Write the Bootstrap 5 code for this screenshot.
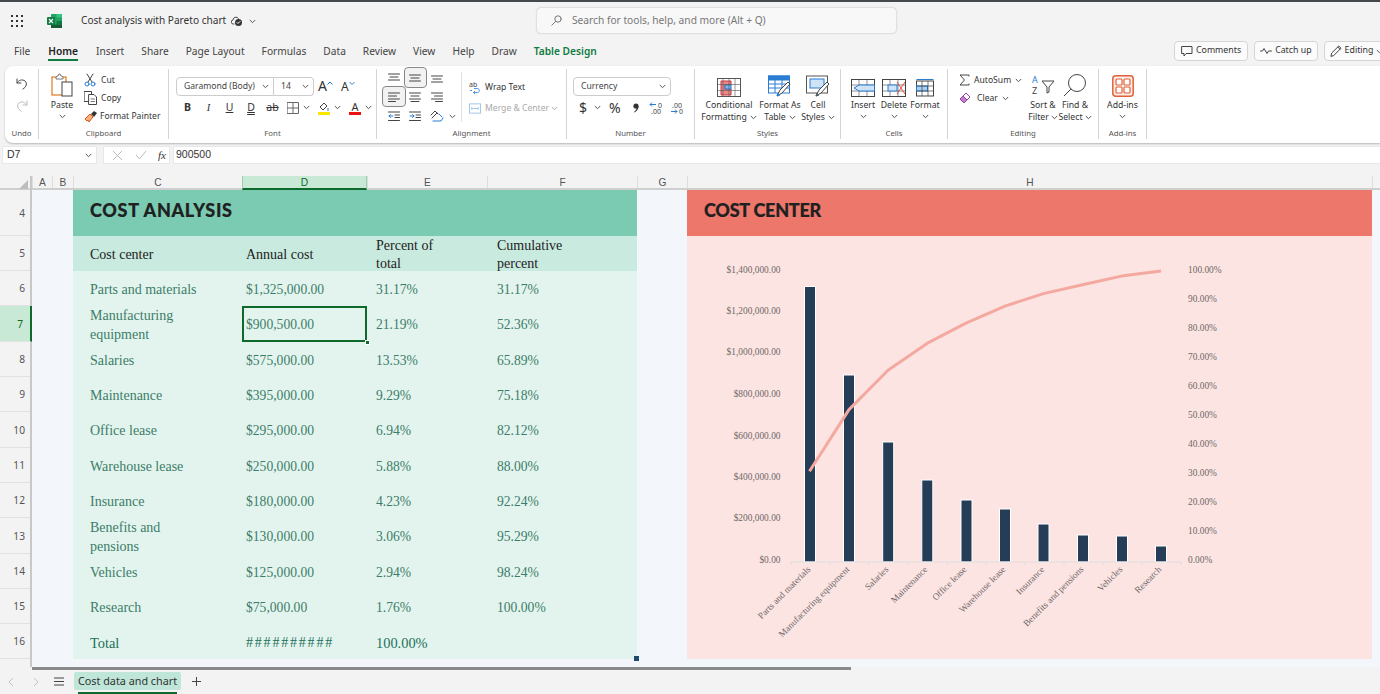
<!DOCTYPE html>
<html lang="en">
<head>
<meta charset="utf-8">
<title>Cost analysis with Pareto chart</title>
<link href="https://cdn.jsdelivr.net/npm/bootstrap@5.3.0/dist/css/bootstrap.min.css" rel="stylesheet">
<style>
html,body{height:694px;overflow:hidden}
body{font-family:"Noto Sans",sans-serif;background:#f3f3f3;color:#333;font-size:10px;border-top:2px solid #45494c;width:1380px}
svg{display:block;flex:none}
.ic{fill:none;stroke:#444;stroke-width:1;stroke-linecap:round;stroke-linejoin:round}
.chev{width:7px;height:5px;fill:none;stroke:#555;stroke-width:1}
.titlebar{height:38px;position:relative}
.waffle{margin-left:11px;margin-right:24px}
.doc-title{font-size:10.1px;color:#333;margin-left:19px;margin-right:5px}
.searchbox{position:absolute;left:537px;top:6px;width:359px;height:25px;background:#f8f8f8;border-radius:4px;box-shadow:0 0 2px rgba(0,0,0,.3);color:#777;font-size:10.2px;padding-left:14px;gap:10px}
.tabrow{height:26px;padding-left:14px}
.tabitem{font-size:10.2px;color:#444;margin-right:17px;line-height:22px;height:22px;text-decoration:none}
.tabitem.on{font-weight:600;color:#222;border-bottom:2px solid #107c41;height:21px}
.tabitem.design{font-weight:600;color:#107c41}
.actbtn{height:20px;margin-top:1px;background:#fbfbfb;border:1px solid #d5d5d5;border-radius:4px;font-size:8.8px;color:#333;padding:0 5px;gap:3px;margin-right:6px;flex:none}
.ribbon{margin-left:5px;height:77px;background:#fff;border-radius:8px 0 0 8px;box-shadow:0 1px 2px rgba(0,0,0,.25);padding-top:3px}
.rgrp{height:70px;border-right:1px solid #d4d4d4;flex:none;display:flex;flex-direction:column}
.rbody{height:58px;display:flex;position:relative}
.rlabel{text-align:center;font-size:7.8px;color:#555;line-height:12px}
.g-undo{width:34px}.g-clip{width:130px}.g-font{width:208px}.g-align{width:190px}.g-num{width:128px}.g-style{width:146px}.g-cell{width:107px}.g-edit{width:151px}.g-add{width:48px}
.vbtn{display:flex;flex-direction:column;align-items:center;font-size:8.7px;line-height:12px;color:#333;text-align:center}
.vbtn .ibox{height:30px;display:flex;align-items:flex-end;padding-bottom:2px}
.vbtn .chev{margin:3px auto 0}
.vbtn span{display:flex;align-items:center;gap:1px;justify-content:center;white-space:nowrap}
.smbtn{display:flex;align-items:center;gap:4px;height:18px;font-size:8.6px;color:#333;white-space:nowrap}
.selbox{height:19px;border:1px solid #ccc;border-radius:4px;font-size:8.6px;color:#444;align-items:center;display:flex;justify-content:space-between;padding:0 4px 0 7px}
.fgl{height:19px;display:flex;align-items:center;justify-content:center}
.sel-al{outline:1px solid #888;border-radius:3px;background:#f2f2f2}
.dis{color:#aaa}
.fbar{height:18px;margin-top:3px;margin-left:2px;gap:6px}
.fbox{background:#fff;height:18px;border:1px solid #e8e8e8;display:flex;align-items:center;font-family:"Liberation Sans",sans-serif;font-size:10.5px;color:#333}
.sheet{margin-top:12px}
.rowhd{width:32px;flex:none;border-right:2px solid #c8c8c8}
.colhd{height:14px;border-bottom:2px solid #cfcfcf;position:relative}
.chcell{flex:none;height:12px;line-height:14px;text-align:center;font-size:10.2px;color:#555;border-left:1px solid #ddd;font-family:"Liberation Sans",sans-serif}
.chcell.cur{background:#c8e9d6;color:#0e6a2b;height:14px;border-bottom:2px solid #0e6a2b;border-left:1px solid #9fcfb3;border-right:1px solid #9fcfb3}
.corner{width:32px;flex:none;border-right:2px solid #c8c8c8;height:14px;position:relative}
.corner svg{position:absolute;right:2px;bottom:1px}
.rh{display:flex;align-items:center;justify-content:flex-end;padding:2px 5px 0 0;font-size:10.2px;color:#555;border-bottom:1px solid #e2e2e2}
.rh.cur{background:#c8e9d6;color:#0e6a2b;margin-right:-2px;border-right:2px solid #0e6a2b;padding-right:7px}
.gridbody{background:#f3f7fb;height:477px;flex:1;position:relative;overflow:hidden}
.tblwrap{margin-left:41px;width:564px;flex:none;position:relative}
.cost{table-layout:fixed;width:564px;margin:0;font-family:"Liberation Serif",serif;font-size:14px;color:#3c7d69;background:#e3f4ee;--bs-table-bg:transparent;--bs-table-color:#3c7d69;border-collapse:collapse}
.cost td,.cost th{padding:2px 3px 0 4px;border:0;vertical-align:middle;line-height:18px;font-weight:400;background:transparent;box-shadow:none}
.cost td:first-child,.cost th:first-child{padding-left:17px}
.cost td:nth-child(3),.cost th:nth-child(3){padding-left:9px}
.cost td:nth-child(4),.cost th:nth-child(4){padding-left:10px}
.cost .amt{font-size:13.6px}
.twoline{display:block;line-height:19px;margin:-2px 0}
.hh .twoline{line-height:18px}
.cost thead tr.tt th{background:#7bcbb2;height:46px;padding:0 0 6px 17px}
.sheadline{font-family:Lato,sans-serif;font-weight:900;font-size:18px;color:#20201f;margin:0;line-height:1;-webkit-text-stroke:.2px #20201f}
.spread{letter-spacing:.7px}
.tight{letter-spacing:-.25px}
.cost thead tr.hh th{background:#c9eadf;color:#222;height:35px}
.cost td.active{outline:2px solid #0e6a2b;outline-offset:-2px;box-shadow:inset 0 0 0 1px #0e6a2b}
.cost tr.tot td{color:#22705a;font-size:14.4px}
.cost tr.tot td.hash{font-size:14px;letter-spacing:1.8px}
.handle{position:absolute;width:5px;height:5px;background:#0e6a2b;border:1px solid #fff}
.corner-h{position:absolute;right:-2px;bottom:-2px;width:5px;height:5px;background:#1e4a6e}
.chartcol{margin-left:50px;width:685px;flex:none}
.chead{background:#ee776c;height:46px;padding-left:17px;padding-bottom:6px}
.cbody{background:#fce4e3;height:423px}
.cbody text{font-family:"Liberation Serif",serif;fill:#6f6866;font-size:9.4px}
.cbody .xlab text{font-size:9.2px}
.thumb{height:3px;background:#8a8a8a;width:819px;margin-left:32px}
.btmbar{height:23px;position:relative;background:#f3f3f3}
.sheettab{margin-left:10px;height:18px;background:#bfe6d9;border-radius:2px;padding:0 4px;font-size:10.8px;color:#333;line-height:18px;position:relative;margin-top:-1px}
.sheettab::after{content:"";position:absolute;left:4px;right:4px;bottom:-4px;height:2px;background:#0e6a2b}
</style>
</head>
<body>
<svg width="0" height="0" class="position-absolute">
<symbol id="ch" viewBox="0 0 7 5"><path d="M.8 1l2.700 2.700L6.200 1"/></symbol>
</svg>

<div class="titlebar d-flex align-items-center">
  <svg class="waffle" width="12" height="12" viewBox="0 0 12 12" fill="#333"><rect width="2" height="2"/><rect x="5" width="2" height="2"/><rect x="10" width="2" height="2"/><rect y="5" width="2" height="2"/><rect x="5" y="5" width="2" height="2"/><rect x="10" y="5" width="2" height="2"/><rect y="10" width="2" height="2"/><rect x="5" y="10" width="2" height="2"/><rect x="10" y="10" width="2" height="2"/></svg>
  <svg width="15" height="14" viewBox="0 0 15 14"><rect x="4" width="11" height="14" rx="1" fill="#21a366"/><rect x="9.500" width="5.500" height="3.500" fill="#33c481"/><rect x="9.500" y="7" width="5.500" height="3.500" fill="#107c41"/><rect x="4" y="10.500" width="11" height="3.500" fill="#185c37"/><rect y="3" width="8" height="8" rx="1" fill="#107c41"/><path d="M2 5l4 4M6 5L2 9" stroke="#fff" stroke-width="1.200"/></svg>
  <span class="doc-title">Cost analysis with Pareto chart</span>
  <svg width="12" height="11" viewBox="0 0 12 11" class="ic" style="margin-right:6px"><path d="M3 8H2.500A2 2 0 0 1 2 4a3 3 0 0 1 5.500-1.500"/><circle cx="7.500" cy="6.500" r="3.500" fill="#333" stroke="none"/><path d="M6 6.500l1 1 2-2" stroke="#fff"/></svg>
  <svg class="chev"><use href="#ch"/></svg>
  <div class="searchbox d-flex align-items-center">
    <svg width="11" height="11" viewBox="0 0 11 11" class="ic" style="stroke:#777"><circle cx="7" cy="4" r="3.200"/><path d="M4.700 6.300L.8 10.200"/></svg>
    <span>Search for tools, help, and more (Alt + Q)</span>
  </div>
</div>

<div class="tabrow d-flex align-items-start">
  <a class="tabitem" style="margin-right:18px">File</a><a class="tabitem on" style="margin-right:18px">Home</a><a class="tabitem">Insert</a><a class="tabitem">Share</a><a class="tabitem">Page Layout</a><a class="tabitem">Formulas</a><a class="tabitem">Data</a><a class="tabitem">Review</a><a class="tabitem">View</a><a class="tabitem">Help</a><a class="tabitem">Draw</a><a class="tabitem design">Table Design</a>
  <div class="ms-auto d-flex" style="width:206px;overflow:hidden;flex:none">
    <div class="actbtn d-flex align-items-center" style="padding:0 6px"><svg width="12" height="12" viewBox="0 0 12 12" class="ic"><path d="M1 1.500h10v7H5L3 11V8.500H1z"/></svg>Comments</div>
    <div class="actbtn d-flex align-items-center"><svg width="12" height="8" viewBox="0 0 12 8" class="ic"><path d="M.5 4h2l1.500-2.500L7 6.500 8.500 4h3"/></svg>Catch up</div>
    <div class="actbtn d-flex align-items-center"><svg width="12" height="12" viewBox="0 0 12 12" class="ic"><path d="M1 11l.7-3L8.800 1l2.200 2.200L4 10.300zM7.800 2l2.200 2.200"/></svg>Editing<svg class="chev"><use href="#ch"/></svg></div>
  </div>
</div>

<div class="ribbon d-flex">
  <div class="rgrp g-undo"><div class="rbody flex-column align-items-center pt-2 gap-2">
    <svg width="14" height="14" viewBox="0 0 14 14" class="ic"><path d="M2 2v4h4M2 6c2-3 5-4 8-2 2.500 2 1.500 6-2 8"/></svg>
    <svg width="14" height="14" viewBox="0 0 14 14" class="ic" style="stroke:#bbb"><path d="M12 2v4H8M12 6C10 3 7 2 4 4c-2.500 2-1.500 6 2 8"/></svg>
  </div><div class="rlabel">Undo</div></div>

  <div class="rgrp g-clip"><div class="rbody">
    <div class="vbtn" style="margin-left:11px;width:24px">
      <div class="ibox" style="height:30px"><svg width="22" height="24" viewBox="0 0 22 24" fill="none"><rect x="1" y="4" width="14" height="18" stroke="#e07a1f" stroke-width="1.200"/><path d="M5 4l1-1h1l1-2h1l1 2h1l1 1v2H5z" fill="#fff" stroke="#777"/><rect x="11" y="9" width="10" height="14" fill="#fff" stroke="#444"/></svg></div>
      <span>Paste</span><svg class="chev"><use href="#ch"/></svg>
    </div>
    <div class="d-flex flex-column" style="margin-left:10px;margin-top:2px">
      <div class="smbtn"><svg width="12" height="14" viewBox="0 0 12 14" class="ic"><path d="M3 1l5 8M9 1L4 9" stroke="#444"/><circle cx="3" cy="11" r="2" stroke="#2b7cd3"/><circle cx="9" cy="11" r="2" stroke="#2b7cd3"/></svg><span style="margin-left:1px">Cut</span></div>
      <div class="smbtn"><svg width="13" height="14" viewBox="0 0 13 14" class="ic"><rect x=".5" y=".5" width="7" height="10"/><path d="M5 3.500h5l2.500 2.500v7.500H5z" fill="#fff"/><path d="M7 8h3.500M7 10.500h3.500" stroke-width=".7"/></svg><span>Copy</span></div>
      <div class="smbtn" style="gap:2px"><svg width="14" height="13" viewBox="0 0 14 13" fill="none"><path d="M1 9l5-5 3 3-4 5-1-2-1 1z" fill="#f7b27a" stroke="#d9581d"/><path d="M7 4l3-3 3 2-3 4z" fill="#333"/></svg><span>Format Painter</span></div>
    </div>
  </div><div class="rlabel">Clipboard</div></div>

  <div class="rgrp g-font"><div class="rbody flex-column" style="padding:8px 0 0 7px">
    <div class="d-flex align-items-center">
      <div class="selbox" style="width:98px;border-radius:4px 0 0 4px"><span>Garamond (Body)</span><svg class="chev"><use href="#ch"/></svg></div>
      <div class="selbox" style="width:40px;border-left:0;border-radius:0 4px 4px 0"><span>14</span><svg class="chev"><use href="#ch"/></svg></div>
      <div class="d-flex align-items-start" style="margin-left:4px;font-size:14px;line-height:18px;color:#333"><span>A</span><svg width="6" height="4" viewBox="0 0 6 4" fill="none" stroke="#2b7cd3" class="mt-1"><path d="M.5 3.500L3 1l2.500 2.500"/></svg><span class="ms-2" style="font-size:12px;margin-top:1px">A</span><svg width="6" height="4" viewBox="0 0 6 4" fill="none" stroke="#2b7cd3" class="mt-1"><path d="M.5 1L3 3.500 5.500 1"/></svg></div>
    </div>
    <div class="d-flex align-items-center" style="margin-top:2px;padding-left:1px;font-size:10.5px;height:19px;color:#333">
      <span class="fgl" style="width:21px;font-weight:700">B</span><span class="fgl" style="width:21px;font-style:italic;font-family:'Liberation Serif',serif">I</span><span class="fgl text-decoration-underline" style="width:21px">U</span><span class="fgl" style="width:22px;text-decoration:underline double">D</span><span class="fgl text-decoration-line-through" style="width:21px">ab</span>
      <svg width="12" height="12" viewBox="0 0 12 12" class="ic ms-1" style="stroke:#666"><rect x=".5" y=".5" width="11" height="11"/><path d="M6 .5v11M.5 6h11"/></svg><svg class="chev ms-1"><use href="#ch"/></svg>
      <svg width="12" height="14" viewBox="0 0 12 14" class="ms-2" fill="none"><path d="M2 6l4-4 3 3-4 4z" stroke="#444"/><path d="M10 7v3" stroke="#2b7cd3"/><rect y="11" width="12" height="3" fill="#ffe600"/></svg><svg class="chev ms-1"><use href="#ch"/></svg>
      <span class="ms-2 position-relative d-flex flex-column align-items-center" style="width:12px;line-height:11px;font-size:11px">A<i class="d-block" style="width:12px;height:3px;background:#ee1111"></i></span><svg class="chev ms-1"><use href="#ch"/></svg>
    </div>
  </div><div class="rlabel">Font</div></div>

  <div class="rgrp g-align"><div class="rbody">
    <div class="d-flex flex-column" style="margin:-1px 0 0 6px;width:66px">
      <div class="d-flex"><span class="fgl" style="width:21.5px"><svg width="12" height="10" viewBox="0 0 12 10" class="ic"><path d="M.5 1h11M2 4h8M.5 7h11"/></svg></span><span class="fgl sel-al" style="width:21.5px"><svg width="12" height="10" viewBox="0 0 12 10" class="ic"><path d="M.5 2h11M2 5h8M.5 8h11"/></svg></span><span class="fgl" style="width:21.5px"><svg width="12" height="10" viewBox="0 0 12 10" class="ic"><path d="M.5 3h11M2 6h8M.5 9h11"/></svg></span></div>
      <div class="d-flex"><span class="fgl sel-al" style="width:21.5px"><svg width="12" height="10" viewBox="0 0 12 10" class="ic"><path d="M.5 1h11M.5 4h8M.5 7h11M.5 9.500h7"/></svg></span><span class="fgl" style="width:21.5px"><svg width="12" height="10" viewBox="0 0 12 10" class="ic"><path d="M.5 1h11M2 4h8M.5 7h11M2 9.500h8"/></svg></span><span class="fgl" style="width:21.5px"><svg width="12" height="10" viewBox="0 0 12 10" class="ic"><path d="M.5 1h11M3.500 4h8M.5 7h11M4.500 9.500h7"/></svg></span></div>
      <div class="d-flex"><span class="fgl" style="width:21.5px"><svg width="12" height="10" viewBox="0 0 12 10" class="ic"><path d="M.5 1h11M7 4h4.500M7 6.500h4.500M.5 9.500h11"/><path d="M5 5H1M2.500 3.500L1 5l1.500 1.500" stroke="#2b7cd3"/></svg></span><span class="fgl" style="width:21.5px"><svg width="12" height="10" viewBox="0 0 12 10" class="ic"><path d="M.5 1h11M7 4h4.500M7 6.500h4.500M.5 9.500h11"/><path d="M1 5h4M3.500 3.500L5 5 3.500 6.500" stroke="#2b7cd3"/></svg></span><span class="fgl" style="width:21.5px"><svg width="14" height="13" viewBox="0 0 14 13" class="ic"><path d="M1 6l4-4 3 3M2 9l5-5"/><path d="M3 12h8l2-3M9 5l3 3" stroke="#2b7cd3"/></svg></span></div>
    </div>
    <svg class="chev" style="margin-top:45px"><use href="#ch"/></svg>
    <div style="border-left:1px solid #e2e2e2;height:50px;margin:3px 7px 0 5px"></div>
    <div class="d-flex flex-column" style="margin-top:9px">
      <div class="smbtn" style="gap:4px"><svg width="12" height="14" viewBox="0 0 12 14" fill="none"><text x="0" y="7" font-size="7" fill="#444" stroke="none">ab</text><path d="M1 10.500h2M5 8.500h3.500c2.500 0 2.500 4 0 4H4.500M6 11L4.500 12.500 6 14" stroke="#2b7cd3" stroke-width=".8"/></svg><span>Wrap Text</span></div>
      <div class="smbtn dis" style="gap:4px;margin-top:3px"><svg width="12" height="11" viewBox="0 0 13 11" fill="none" stroke="#9cc4e8"><rect x=".5" y=".5" width="12" height="10"/><path d="M3 5.500h7M3 4v3M10 4v3"/></svg><span>Merge &amp; Center</span><svg class="chev" style="stroke:#aaa;margin-left:-2px"><use href="#ch"/></svg></div>
    </div>
  </div><div class="rlabel">Alignment</div></div>

  <div class="rgrp g-num"><div class="rbody flex-column" style="padding:8px 0 0 6px">
    <div class="selbox" style="width:98px"><span>Currency</span><svg class="chev"><use href="#ch"/></svg></div>
    <div class="d-flex align-items-center" style="margin:2px 0 0 6px;height:19px;color:#333">
      <span style="font-size:14px;width:15px">$</span><svg class="chev me-2"><use href="#ch"/></svg>
      <span style="font-size:14px;width:20px;margin-right:2px">%</span>
      <svg width="10" height="12" viewBox="0 0 10 12" fill="#333" style="margin-right:8px"><circle cx="5" cy="4" r="2.600"/><path d="M7.500 4c.3 3-1.500 5-4 6.500l-.5-.6C5 8.500 5.700 7 5.500 5z"/></svg>
      <svg width="15" height="14" viewBox="0 0 15 14" fill="none" stroke="#2b7cd3"><path d="M7 3.500H1M3 1.500l-2 2 2 2"/><text x="9" y="6.500" font-size="7" fill="#444" stroke="none">0</text><text x="2" y="13" font-size="7" fill="#444" stroke="none">.00</text></svg>
      <svg width="15" height="14" viewBox="0 0 15 14" fill="none" stroke="#2b7cd3" style="margin-left:6px"><path d="M1 10.500h6M5 8.500l2 2-2 2"/><text x="2" y="6.500" font-size="7" fill="#444" stroke="none">.00</text><text x="9" y="13" font-size="7" fill="#444" stroke="none">0</text></svg>
    </div>
  </div><div class="rlabel">Number</div></div>

  <div class="rgrp g-style"><div class="rbody">
    <div class="vbtn" style="width:62px;margin-left:3px"><div class="ibox"><svg width="24" height="19" viewBox="0 0 24 19" fill="none" stroke="#555"><rect x=".5" y=".5" width="23" height="18" fill="#fff"/><path d="M4 3h10v4H8v4h6v6H4z" fill="#ec8a88" stroke="#d13438"/><rect x="8" y="7" width="6" height="4" fill="#7fb6e6" stroke="#2b7cd3"/><path d="M.5 6.500h23M.5 12.500h23M6 .5v18M12 .5v18M18 .5v18" stroke-width=".6"/></svg></div><span>Conditional</span><span>Formatting<svg class="chev" style="margin:0 0 0 2px"><use href="#ch"/></svg></span></div>
    <div class="vbtn" style="width:44px;margin-left:-2px"><div class="ibox"><svg width="24" height="22" viewBox="0 0 24 22" fill="none" stroke="#2b7cd3"><rect x=".5" y="1" width="21" height="17" fill="#fff"/><rect x=".5" y="1" width="21" height="4" fill="#2b7cd3"/><path d="M.5 9h21M.5 13h21M7 5v13M14 5v13"/><path d="M9 21l5-3 8-9-2-2-8 8z" fill="#fff" stroke="#444"/><path d="M9 21l1-3 2 2z" fill="#2b7cd3"/></svg></div><span>Format As</span><span>Table<svg class="chev" style="margin:0 0 0 2px"><use href="#ch"/></svg></span></div>
    <div class="vbtn" style="width:34px;margin-left:-1px"><div class="ibox"><svg width="24" height="22" viewBox="0 0 24 22" fill="none" stroke="#555"><rect x=".5" y="1" width="21" height="17" fill="#fff"/><rect x="4" y="4" width="14" height="9" fill="#cfe3f7" stroke="#2b7cd3"/><path d="M10 21l5-3 8-9-2-2-8 8z" fill="#fff" stroke="#444"/><path d="M10 21l1-3 2 2z" fill="#2b7cd3"/></svg></div><span>Cell</span><span>Styles<svg class="chev" style="margin:0 0 0 2px"><use href="#ch"/></svg></span></div>
  </div><div class="rlabel">Styles</div></div>

  <div class="rgrp g-cell"><div class="rbody" style="padding-left:7px;gap:1px">
    <div class="vbtn" style="width:30px"><div class="ibox"><svg width="24" height="18" viewBox="0 0 24 18" fill="none" stroke="#444"><rect x=".5" y=".5" width="23" height="17" fill="#fff"/><path d="M.5 6h23M.5 12h23M8 .5v17M16 .5v17" stroke-width=".6"/><path d="M23.500 6H8L3 9l5 3h15.500z" fill="#cfe3f7" stroke="#2b7cd3"/></svg></div><span>Insert</span><svg class="chev"><use href="#ch"/></svg></div>
    <div class="vbtn" style="width:30px"><div class="ibox"><svg width="24" height="18" viewBox="0 0 24 18" fill="none" stroke="#444"><rect x=".5" y=".5" width="23" height="17" fill="#fff"/><path d="M.5 6h23M.5 12h23M8 .5v17M16 .5v17" stroke-width=".6"/><rect x="6" y="6" width="9" height="6" fill="#cfe3f7" stroke="#2b7cd3"/><path d="M15 3l8 12M23 3l-8 12" stroke="#e0503c" stroke-width="1"/></svg></div><span>Delete</span><svg class="chev"><use href="#ch"/></svg></div>
    <div class="vbtn" style="width:30px"><div class="ibox"><svg width="18" height="18" viewBox="0 0 18 18" fill="none" stroke="#444"><path d="M.5 .5h17" stroke="#2b7cd3" stroke-width="1"/><rect x=".5" y="2" width="17" height="15" fill="#fff"/><rect x=".5" y="7" width="11" height="5" fill="#a9d0f2" stroke="#2b7cd3"/><path d="M6 2v15M12 2v15M.5 7h17M.5 12h17" stroke-width=".7"/></svg></div><span>Format</span><svg class="chev"><use href="#ch"/></svg></div>
  </div><div class="rlabel">Cells</div></div>

  <div class="rgrp g-edit"><div class="rbody">
    <div class="d-flex flex-column" style="margin:2px 0 0 11px;width:72px">
      <div class="smbtn"><svg width="11" height="12" viewBox="0 0 11 12" class="ic"><path d="M10 2V1H1l4.500 5L1 11h9v-1"/></svg><span>AutoSum</span><svg class="chev"><use href="#ch"/></svg></div>
      <div class="smbtn"><svg width="12" height="12" viewBox="0 0 12 12" fill="none"><path d="M1 7l6-6 4 4-6 6z" fill="#fff" stroke="#9a3fa8"/><path d="M1 7l3-3 4 4-3 3z" fill="#c47ccf" stroke="#9a3fa8"/></svg><span style="margin-left:2px">Clear</span><svg class="chev"><use href="#ch"/></svg></div>
    </div>
    <div class="vbtn" style="width:30px;margin-left:-3px"><div class="ibox"><svg width="24" height="24" viewBox="0 0 24 24" fill="none" stroke="#444"><text x="1" y="10" font-size="9" fill="#2b7cd3" stroke="none">A</text><text x="1" y="21" font-size="9" fill="#444" stroke="none">Z</text><path d="M11 8h12l-5 6v5l-2 1v-6z"/></svg></div><span>Sort &amp;</span><span>Filter<svg class="chev" style="margin:0 0 0 1px"><use href="#ch"/></svg></span></div>
    <div class="vbtn" style="width:34px"><div class="ibox"><svg width="24" height="24" viewBox="0 0 24 24" fill="none" stroke="#444"><circle cx="14" cy="10" r="8.500"/><path d="M8 16l-7 7"/></svg></div><span>Find &amp;</span><span>Select<svg class="chev" style="margin:0 0 0 1px"><use href="#ch"/></svg></span></div>
  </div><div class="rlabel">Editing</div></div>

  <div class="rgrp g-add"><div class="rbody justify-content-center">
    <div class="vbtn"><div class="ibox"><svg width="22" height="22" viewBox="0 0 22 22" fill="none" stroke="#e2613a" stroke-width="1.200"><rect x=".8" y=".8" width="20.400" height="20.400" rx="3" stroke-width="1.500" fill="#fdeee8"/><rect x="4" y="4" width="6" height="6" rx="1" fill="#fff"/><rect x="12" y="4" width="6" height="6" rx="1" fill="#fff"/><rect x="4" y="12" width="6" height="6" rx="1" fill="#fff"/><rect x="12" y="12" width="6" height="6" rx="1" fill="#fff"/></svg></div><span>Add-ins</span><svg class="chev"><use href="#ch"/></svg></div>
  </div><div class="rlabel">Add-ins</div></div>
</div>

<div class="fbar d-flex">
  <div class="fbox justify-content-between" style="width:95px;padding:0 4px"><span>D7</span><svg class="chev"><use href="#ch"/></svg></div>
  <div class="fbox" style="width:67px;gap:12px;padding-left:8px"><svg width="11" height="11" viewBox="0 0 11 11" fill="none" stroke="#bbb"><path d="M1 1l9 9M10 1l-9 9"/></svg><svg width="12" height="10" viewBox="0 0 12 10" fill="none" stroke="#bbb"><path d="M1 5l3.500 4L11 1"/></svg><span style="font-family:'Liberation Serif',serif;font-style:italic;font-size:11px;margin-left:-1px">fx</span></div>
  <div class="fbox flex-grow-1" style="margin-left:-3px;padding-left:2px;border-right:0">900500</div>
</div>

<div class="sheet">
  <div class="colhd d-flex">
    <div class="corner"><svg width="9" height="9" viewBox="0 0 9 9"><path d="M9 0v9H0z" fill="#bdbdbd"/></svg></div>
    <div class="chcell" style="width:20px">A</div><div class="chcell" style="width:21px">B</div><div class="chcell" style="width:169px">C</div><div class="chcell cur" style="width:125px">D</div><div class="chcell" style="width:120px">E</div><div class="chcell" style="width:150px">F</div><div class="chcell" style="width:50px">G</div><div class="chcell" style="width:685px">H</div><div class="chcell flex-grow-1"></div>
  </div>
  <div class="d-flex">
    <div class="rowhd">
      <div class="rh" style="height:46px">4</div><div class="rh" style="height:35px">5</div><div class="rh" style="height:35px">6</div><div class="rh cur" style="height:36px">7</div><div class="rh" style="height:35px">8</div><div class="rh" style="height:35px">9</div><div class="rh" style="height:36px">10</div><div class="rh" style="height:35px">11</div><div class="rh" style="height:35px">12</div><div class="rh" style="height:36px">13</div><div class="rh" style="height:35px">14</div><div class="rh" style="height:35px">15</div><div class="rh" style="height:35px">16</div>
    </div>
    <div class="gridbody d-flex align-items-start">
      <div class="tblwrap">
        <table class="table cost">
          <colgroup><col style="width:169px"><col style="width:125px"><col style="width:120px"><col style="width:150px"></colgroup>
          <thead>
            <tr class="tt"><th colspan="4"><h1 class="sheadline spread">COST ANALYSIS</h1></th></tr>
            <tr class="hh"><th>Cost center</th><th>Annual cost</th><th><span class="twoline">Percent of<br>total</span></th><th><span class="twoline">Cumulative<br>percent</span></th></tr>
          </thead>
          <tbody>
            <tr style="height:35px"><td>Parts and materials</td><td class="amt">$1,325,000.00</td><td class="amt">31.17%</td><td class="amt">31.17%</td></tr>
            <tr style="height:36px"><td><span class="twoline">Manufacturing<br>equipment</span></td><td class="amt active position-relative">$900,500.00<i class="handle" style="right:-3px;bottom:-3px"></i></td><td class="amt">21.19%</td><td class="amt">52.36%</td></tr>
            <tr style="height:35px"><td>Salaries</td><td class="amt">$575,000.00</td><td class="amt">13.53%</td><td class="amt">65.89%</td></tr>
            <tr style="height:35px"><td>Maintenance</td><td class="amt">$395,000.00</td><td class="amt">9.29%</td><td class="amt">75.18%</td></tr>
            <tr style="height:36px"><td>Office lease</td><td class="amt">$295,000.00</td><td class="amt">6.94%</td><td class="amt">82.12%</td></tr>
            <tr style="height:35px"><td>Warehouse lease</td><td class="amt">$250,000.00</td><td class="amt">5.88%</td><td class="amt">88.00%</td></tr>
            <tr style="height:35px"><td>Insurance</td><td class="amt">$180,000.00</td><td class="amt">4.23%</td><td class="amt">92.24%</td></tr>
            <tr style="height:36px"><td><span class="twoline">Benefits and<br>pensions</span></td><td class="amt">$130,000.00</td><td class="amt">3.06%</td><td class="amt">95.29%</td></tr>
            <tr style="height:35px"><td>Vehicles</td><td class="amt">$125,000.00</td><td class="amt">2.94%</td><td class="amt">98.24%</td></tr>
            <tr style="height:35px"><td>Research</td><td class="amt">$75,000.00</td><td class="amt">1.76%</td><td class="amt">100.00%</td></tr>
            <tr class="tot" style="height:35px"><td>Total</td><td class="hash">##########</td><td>100.00%</td><td></td></tr>
          </tbody>
        </table>
        <i class="corner-h"></i>
      </div>
      <div class="chartcol">
        <div class="chead d-flex align-items-center"><h2 class="sheadline tight">COST CENTER</h2></div>
        <div class="cbody">
          <svg width="685" height="423" viewBox="687 236 685 423">
            <g fill="#253d56" stroke="#fff" stroke-width="1">
              <rect x="804.500" y="286.500" width="11" height="275.500"/><rect x="843.500" y="375" width="11" height="187"/><rect x="882.700" y="442" width="11" height="120"/><rect x="921.800" y="480" width="11" height="82"/><rect x="961" y="500" width="11" height="62"/><rect x="999.500" y="509" width="11" height="53"/><rect x="1038" y="524" width="11" height="38"/><rect x="1077.500" y="535" width="11" height="27"/><rect x="1116.500" y="536" width="11" height="26"/><rect x="1155.500" y="546" width="11" height="16"/>
            </g>
            <path d="M791 562H1181" stroke="#ddd" stroke-width="1"/>
            <path d="M791 562v3M830 562v3M869 562v3M908 562v3M947 562v3M986 562v3M1025 562v3M1064 562v3M1103 562v3M1142 562v3M1181 562v3" stroke="#ddd"/>
            <path d="M809.500 471.300L849 409.600 888 370.300 927 343.400 966 323.200 1005 306.100 1043.500 293.600 1082.500 284.700 1121.500 276.100 1161 271" fill="none" stroke="#f4a9a0" stroke-width="3" stroke-linejoin="round"/>
            <g text-anchor="end">
              <text x="780.500" y="272.500">$1,400,000.00</text><text x="780.500" y="314">$1,200,000.00</text><text x="780.500" y="355">$1,000,000.00</text><text x="780.500" y="397">$800,000.00</text><text x="780.500" y="439">$600,000.00</text><text x="780.500" y="480">$400,000.00</text><text x="780.500" y="521">$200,000.00</text><text x="780.500" y="563">$0.00</text>
            </g>
            <g>
              <text x="1188" y="272.500">100.00%</text><text x="1188" y="301.500">90.00%</text><text x="1188" y="330.500">80.00%</text><text x="1188" y="359.500">70.00%</text><text x="1188" y="388.500">60.00%</text><text x="1188" y="417.500">50.00%</text><text x="1188" y="446.500">40.00%</text><text x="1188" y="475.500">30.00%</text><text x="1188" y="505">20.00%</text><text x="1188" y="534">10.00%</text><text x="1188" y="563">0.00%</text>
            </g>
            <g text-anchor="end" class="xlab">
              <text transform="translate(811 570) rotate(-45)">Parts and materials</text>
              <text transform="translate(850 570) rotate(-45)">Manufacturing equipment</text>
              <text transform="translate(889 570) rotate(-45)">Salaries</text>
              <text transform="translate(928 570) rotate(-45)">Maintenance</text>
              <text transform="translate(967 570) rotate(-45)">Office lease</text>
              <text transform="translate(1006 570) rotate(-45)">Warehouse lease</text>
              <text transform="translate(1045 570) rotate(-45)">Insurance</text>
              <text transform="translate(1084 570) rotate(-45)">Benefits and pensions</text>
              <text transform="translate(1123 570) rotate(-45)">Vehicles</text>
              <text transform="translate(1162 570) rotate(-45)">Research</text>
            </g>
          </svg>
        </div>
      </div>
    </div>
  </div>
</div>
<div class="thumb"></div>
<div class="btmbar d-flex align-items-center">
  <svg width="6" height="10" viewBox="0 0 6 10" fill="none" stroke="#c4c4c4" style="margin-left:8px"><path d="M5 1L1 5l4 4"/></svg>
  <svg width="6" height="10" viewBox="0 0 6 10" fill="none" stroke="#c4c4c4" style="margin-left:19px"><path d="M1 1l4 4-4 4"/></svg>
  <svg width="10" height="9" viewBox="0 0 10 9" fill="none" stroke="#444" style="margin-left:15px"><path d="M0 1h10M0 4.500h10M0 8h10"/></svg>
  <div class="sheettab">Cost data and chart</div>
  <svg width="9" height="9" viewBox="0 0 9 9" fill="none" stroke="#444" style="margin-left:11px"><path d="M4.500 0v9M0 4.500h9"/></svg>
</div>
<script src="https://cdn.jsdelivr.net/npm/bootstrap@5.3.0/dist/js/bootstrap.bundle.min.js"></script>
</body>
</html>
